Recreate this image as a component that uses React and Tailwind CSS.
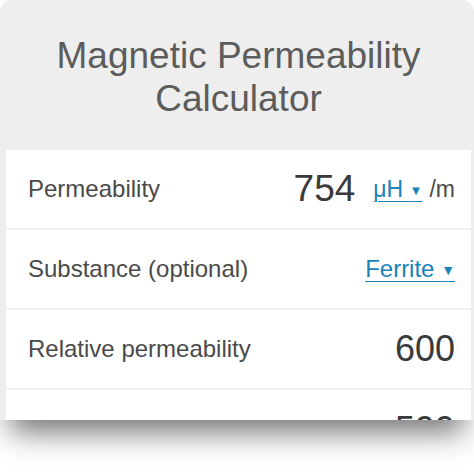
export default function App() {
  const font = { fontFamily: '"Liberation Sans", Arial, sans-serif' };

  return (
    <div className="w-[474px] h-[474px] bg-white overflow-hidden" style={font}>
      <div className="h-[420px] rounded-t-[12px] bg-[#eeeeee] pl-[6px] pr-[3px] overflow-hidden shadow-[0_22px_30px_-10px_rgba(0,0,0,0.55)] relative">
        {/* Title */}
        <div className="h-[150px] flex items-center justify-center pt-[4px]">
          <h1 className="text-center text-[37px] leading-[43px] text-[#5c5c5c]">
            Magnetic Permeability
            <br />
            Calculator
          </h1>
        </div>

        {/* Rows */}
        <div className="bg-white">
          <div className="h-[80px] flex items-center justify-between pl-[22px] pr-[16px] border-b-2 border-[#f0f0f0]">
            <span className="text-[24px] text-[#4a4a4a]">Permeability</span>
            <div className="flex items-center gap-[18px]">
              <span className="text-[37px] text-[#3a3a3a]">754</span>
              <span className="flex items-center gap-[7px] text-[23px]">
                <span className="text-[#1b82b8] underline underline-offset-[4px] decoration-1">
                  μH <span className="text-[13px] align-middle">▼</span>
                </span>
                <span className="text-[#4a4a4a]">/m</span>
              </span>
            </div>
          </div>

          <div className="h-[80px] flex items-center justify-between pl-[22px] pr-[16px] border-b-2 border-[#f0f0f0]">
            <span className="text-[24px] text-[#4a4a4a]">Substance (optional)</span>
            <span className="text-[24px] text-[#1b82b8] underline underline-offset-[4px] decoration-1">
              Ferrite <span className="text-[14px] align-middle">▼</span>
            </span>
          </div>

          <div className="h-[80px] flex items-center justify-between pl-[22px] pr-[16px] border-b-2 border-[#f0f0f0]">
            <span className="text-[24px] text-[#4a4a4a]">Relative permeability</span>
            <span className="text-[36px] text-[#3a3a3a]">600</span>
          </div>

          <div className="h-[80px] flex items-center justify-between pl-[22px] pr-[16px]">
            <span className="text-[24px] text-[#4a4a4a]">Susceptibility</span>
            <span className="text-[36px] text-[#3a3a3a]">599</span>
          </div>
        </div>
      </div>
    </div>
  );
}
